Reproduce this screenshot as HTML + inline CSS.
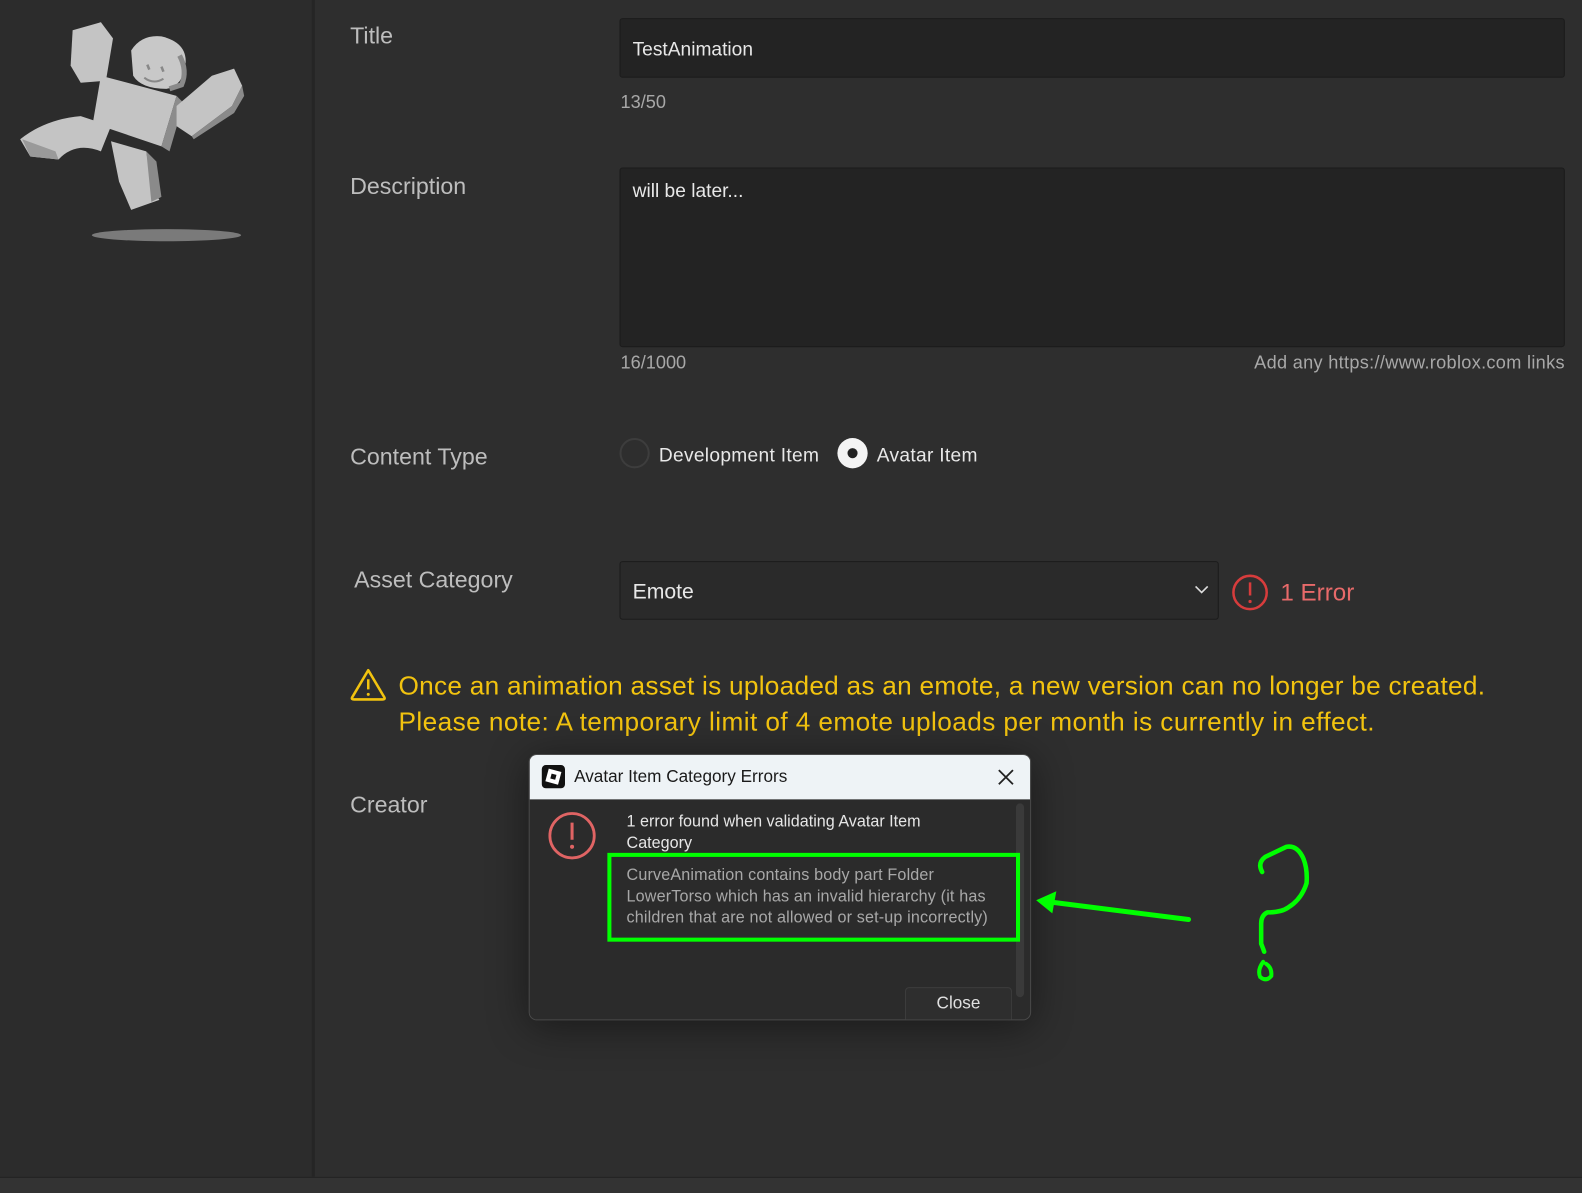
<!DOCTYPE html>
<html><head><meta charset="utf-8"><style>
*{margin:0;padding:0;box-sizing:border-box}
html,body{width:1582px;height:1193px;overflow:hidden;background:#2e2e2e;font-family:"Liberation Sans",sans-serif}
#w{position:absolute;left:0;top:0;width:1568px;height:1182px;transform-origin:0 0;transform:scale(1.00893,1.0093);background:#2e2e2e}
.a{position:absolute}
.lbl{color:#bdbdbd;font-size:23px}
.inp{background:#232323;border:1px solid #1b1b1b;border-radius:3px}
.txt{color:#e8e8e8;font-size:19px}
.sm{color:#a8a8a8;font-size:18px}
.y{color:#f2c30f;font-size:26px}
</style></head><body><div id="w">
<div class="a" style="left:0;top:0;width:310px;height:1166px;background:#2c2c2c"></div>
<div class="a" style="left:309px;top:0;width:3px;height:1166px;background:#252525"></div>
<div class="a" style="left:0;top:1166px;width:1568px;height:16px;background:#333;border-top:1px solid #222"></div>

<svg class="a" style="left:15px;top:15px" width="230" height="230" viewBox="15 15 230 230">
<ellipse cx="165" cy="233" rx="74" ry="6" fill="#7a7a7a"/>
<path d="M72 30 L100 22 L112 38 L105 80 L80 82 L70 65 Z" fill="#c4c4c4"/>
<path d="M92 25 L100 22 L104 30Z" fill="#c4c4c4"/>
<path d="M130 50 Q140 34 160 36 Q185 42 184 62 Q182 85 165 88 Q140 88 132 75 Z" fill="#c8c8c8"/>
<path d="M178 55 Q186 70 180 84 L168 88" fill="none" stroke="#8a8a8a" stroke-width="5"/>
<path d="M100 75 L175 95 L160 145 L92 122 Z" fill="#c4c4c4"/>
<path d="M175 95 L182 102 L168 150 L160 145Z" fill="#8c8c8c"/>
<path d="M175 105 L210 75 L232 68 L240 85 L230 105 L190 135 L175 125Z" fill="#c4c4c4"/>
<path d="M230 105 L240 85 L242 95 L232 112 L192 138 L190 135Z" fill="#8a8a8a"/>
<path d="M20 138 Q45 118 80 115 L110 125 L100 150 Q75 140 58 158 L30 155Z" fill="#c4c4c4"/>
<path d="M22 138 L30 155 L58 158 L55 150Z" fill="#9a9a9a"/>
<path d="M110 140 L145 150 L150 185 L158 198 L130 208 L118 180Z" fill="#c4c4c4"/>
<path d="M145 150 L155 160 L160 195 L150 200Z" fill="#8a8a8a"/>
<path d="M146 64 l2 5 M160 66 l2 5" stroke="#888" stroke-width="2.5"/>
<path d="M143 77 Q152 84 162 78" fill="none" stroke="#888" stroke-width="2"/>
</svg>

<div class="a lbl" style="left:347px;top:22px">Title</div>
<div class="a inp" style="left:614px;top:18px;width:937px;height:59px"></div>
<div class="a txt" style="left:627px;top:39px">TestAnimation</div>
<div class="a sm" style="left:615px;top:91px">13/50</div>

<div class="a lbl" style="left:347px;top:171px">Description</div>
<div class="a inp" style="left:614px;top:166px;width:937px;height:178px"></div>
<div class="a txt" style="left:627px;top:179px">will be later...</div>
<div class="a sm" style="left:615px;top:349px">16/1000</div>
<div class="a sm" style="left:1100px;top:349px;width:451px;text-align:right;letter-spacing:0.3px">Add any https://www.roblox.com links</div>

<div class="a lbl" style="left:347px;top:439px">Content Type</div>
<div class="a" style="left:614px;top:434px;width:30px;height:30px;border-radius:50%;border:2px solid #3d3d3d"></div>
<div class="a txt" style="left:653px;top:441px;letter-spacing:0.3px">Development Item</div>
<div class="a" style="left:830px;top:434px;width:30px;height:30px;border-radius:50%;background:#f4f4f4"></div>
<div class="a" style="left:840px;top:444px;width:10px;height:10px;border-radius:50%;background:#222"></div>
<div class="a txt" style="left:869px;top:441px;letter-spacing:0.3px">Avatar Item</div>

<div class="a lbl" style="left:351px;top:561px">Asset Category</div>
<div class="a inp" style="left:614px;top:556px;width:594px;height:58px;background:#2a2a2a"></div>
<div class="a txt" style="left:627px;top:575px;font-size:21px">Emote</div>
<svg class="a" style="left:1183px;top:578px" width="16" height="12"><path d="M2 3 L8 9 L14 3" stroke="#ddd" stroke-width="1.6" fill="none"/></svg>
<svg class="a" style="left:1220px;top:568px" width="38" height="38"><circle cx="19" cy="19" r="16.5" fill="none" stroke="#d73c3c" stroke-width="2.5"/><path d="M19 9 V22" stroke="#d73c3c" stroke-width="2.5"/><circle cx="19" cy="28" r="1.6" fill="#d73c3c"/></svg>
<div class="a" style="left:1269px;top:574px;color:#e86a6a;font-size:24px">1 Error</div>

<svg class="a" style="left:346px;top:661px" width="38" height="34"><path d="M19 3 L35 30 Q36 32 33 32 L5 32 Q2 32 3 30 Z" fill="none" stroke="#f2c30f" stroke-width="2.5" stroke-linejoin="round"/><path d="M19 12 V22" stroke="#f2c30f" stroke-width="2.5"/><circle cx="19" cy="27" r="1.5" fill="#f2c30f"/></svg>
<div class="a y" style="left:395px;top:664px;white-space:nowrap;letter-spacing:0.25px">Once an animation asset is uploaded as an emote, a new version can no longer be created.</div>
<div class="a y" style="left:395px;top:700px;white-space:nowrap;letter-spacing:0.4px">Please note: A temporary limit of 4 emote uploads per month is currently in effect.</div>

<div class="a lbl" style="left:347px;top:784px">Creator</div>

<div class="a" style="left:524px;top:747px;width:498px;height:264px;border-radius:8px;background:#2b2b2b;border:1px solid #4a4a4a;box-shadow:0 6px 40px rgba(0,0,0,.45);overflow:hidden">
 <div style="height:44px;background:#eef3f6;position:relative">
  <div style="position:absolute;left:12px;top:10px;width:23px;height:23px;border-radius:4px;background:#111"><div style="position:absolute;left:5px;top:5px;width:13px;height:13px;background:#fff;transform:rotate(15deg)"></div><div style="position:absolute;left:9px;top:9px;width:5px;height:5px;background:#111;transform:rotate(15deg)"></div></div>
  <div style="position:absolute;left:44px;top:12px;font-size:17px;color:#1a1a1a">Avatar Item Category Errors</div>
  <svg style="position:absolute;left:462px;top:12px" width="20" height="20"><path d="M3 3 L17 17 M17 3 L3 17" stroke="#222" stroke-width="1.8"/></svg>
 </div>
 <div style="position:absolute;left:482px;top:48px;width:8px;height:192px;border-radius:4px;background:#3a3a3a"></div>
 <svg style="position:absolute;left:17px;top:55px" width="50" height="50"><circle cx="25" cy="25" r="22" fill="none" stroke="#e06464" stroke-width="2.8"/><path d="M25 12 V29" stroke="#e06464" stroke-width="3"/><circle cx="25" cy="36" r="2" fill="#e06464"/></svg>
 <div style="position:absolute;left:96px;top:56px;width:330px;font-size:16px;line-height:21px;color:#e6e6e6">1 error found when validating Avatar Item Category</div>
 <div style="position:absolute;left:96px;top:109px;width:385px;font-size:16px;line-height:21px;color:#a8a8a8;letter-spacing:0.15px">CurveAnimation contains body part Folder LowerTorso which has an invalid hierarchy (it has children that are not allowed or set-up incorrectly)</div>
 <div style="position:absolute;left:77px;top:97px;width:409px;height:88px;border:4px solid #00ff00"></div>
 <div style="position:absolute;left:372px;top:230px;width:106px;height:40px;border:1px solid #3c3c3c;border-radius:4px;background:#2e2e2e;color:#e0e0e0;font-size:17px;text-align:center;line-height:30px">Close</div>
</div>

<svg class="a" style="left:1000px;top:820px" width="320" height="170">
<path d="M178 91 L35 73" stroke="#00ff00" stroke-width="5" stroke-linecap="round"/>
<path d="M27 72 L47 63 L43 85 Z" fill="#00ff00"/>
<g transform="translate(-10,-7)">
<path d="M261 51 Q256 42 264 36 L285 26 Q296 24 302 38 Q306 48 305 62 Q300 78 287 86 Q280 91 266 91 Q260 94 260 102 L260 122 Q262 127 263 130" fill="none" stroke="#00ff00" stroke-width="4.5" stroke-linecap="round" stroke-linejoin="round"/>
<path d="M262 140 Q256 148 259 155 Q265 160 270 154 Q271 146 265 142" fill="none" stroke="#00ff00" stroke-width="4" stroke-linecap="round"/>
</g>
</svg>
</div></body></html>
